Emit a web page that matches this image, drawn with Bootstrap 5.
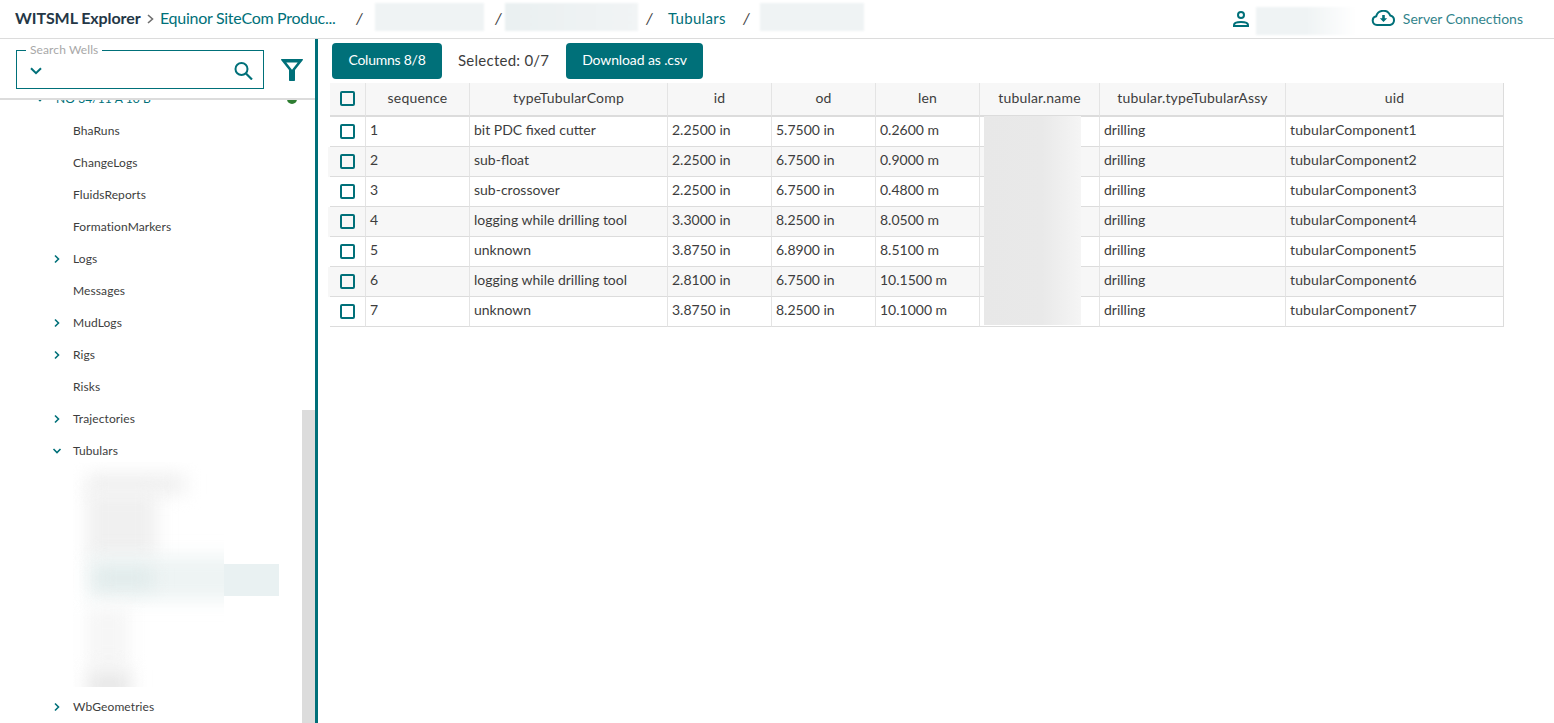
<!DOCTYPE html>
<html lang="en">
<head>
<meta charset="utf-8">
<title>WITSML Explorer</title>
<link href="https://cdn.jsdelivr.net/npm/bootstrap@5.3.0/dist/css/bootstrap.min.css" rel="stylesheet">
<style>
html,body{height:100%;overflow:hidden}
body{font-family:Lato,"Liberation Sans",sans-serif;color:#3d3d3d;background:#fff;font-size:14px}
.topbar{height:39px;border-bottom:1px solid #dcdcdc;padding:0 31px 0 15px}
.brand{font-size:16px;font-weight:700;color:#243746;letter-spacing:-.08px;width:126px;white-space:nowrap;padding-bottom:2px}
.brand-sep{margin:0 6px;width:7px;flex:none;margin-bottom:1px}
.crumb{font-size:16px;color:#007079;white-space:nowrap;padding-bottom:2px}
.crumb-first{width:176px;margin-right:20px;letter-spacing:-.28px}
.slash{font-size:16px;color:#3d3d3d;width:6px;flex:none;font-style:italic;padding-bottom:2px}
.blurbox{height:28px;background:#eff3f4;filter:blur(1px);flex:none;align-self:flex-start}
.bb1{width:109px;margin:3px 11px 0 13px}
.bb2{width:133px;margin:3px 8px 0 4px;background:linear-gradient(90deg,#eaf0f1,#f1f4f5)}
.bb3{width:104px;margin:3px 0 0 11px}
.tub{margin:0 16px 0 16px;width:59px;font-size:15px;letter-spacing:.3px}
.bb4{width:100px;margin:3px 15px 0 7px;background:linear-gradient(90deg,#eff3f4 50%,#fff)}
.server{color:#33848c;font-size:14px;margin-left:7px;white-space:nowrap;padding-bottom:2px}
.cloud{margin-bottom:3px}
.content{height:684px}
.side{width:318px;flex:none;border-right:3px solid #007079;overflow:hidden}
.side-head{height:61px;padding:11px 12px 0 16px;border-bottom:2px solid #dcdcdc;flex:none;position:relative;z-index:2;background:#fff}
.searchbox{width:248px;height:39px;border:1px solid #007079;position:relative;padding:2px 10px 0 13px}
.searchlabel{position:absolute;left:9px;top:-8px;background:#fff;padding:0 4px;font-size:12px;line-height:14px;color:#a8a8a8;letter-spacing:.1px}
.filter-ic{margin-top:9px}
.side-body{height:623px;overflow:hidden}
.tree{width:302px;flex:none;position:relative;margin-top:-17px}
.scroll-track{width:13px;flex:none;padding-top:310px}
.scroll-thumb{height:100%;background:#dcdcdc}
.node{height:32px;font-size:12px;letter-spacing:.1px;color:#3d3d3d;position:relative;padding-left:73px}
.node-top{padding-left:56px;color:#007079}
.tw{position:absolute;left:52px;top:11px}
.tw-top{left:35px}
.dot{position:absolute;left:287px;top:11px;width:10px;height:10px;border-radius:50%;background:#2e7d32}
.blank{height:224px}
.wash{position:absolute;left:73px;top:-5px;width:206px;height:225px;overflow:hidden}
.wash-row{position:absolute;left:0;top:102px;right:0;height:32px;background:#e9f1f2}
.wash-a{position:absolute;left:0;top:0;width:151px;height:225px;background:#fff;overflow:hidden}
.smudge{position:absolute;background:#eeeeee;filter:blur(9px)}
.s1{left:14px;top:12px;width:98px;height:20px;background:#efefef}
.s2{left:14px;top:28px;width:70px;height:70px;background:#f0f0f0}
.s3{left:14px;top:94px;width:170px;height:44px;background:#eef4f4}
.s4{left:22px;top:106px;width:58px;height:20px;background:#dfeaea}
.s5{left:14px;top:145px;width:42px;height:60px;background:#f6f6f6}
.s6{left:14px;top:208px;width:44px;height:30px;background:#e8e8e8}
.main{padding:4px 0 0 12px;min-width:0}
.toolbar{padding-left:2px;height:36px;margin-bottom:4px}
.tealbtn{background:#007079;border:0;color:#fff;font-size:14px;height:36px;border-radius:4px;padding:0 0 4px;letter-spacing:-.12px;--bs-btn-hover-bg:#004f55}
.b1{width:110px}.b2{width:137px}
.b1{letter-spacing:-.25px}
.selected{color:#3d3d3d;font-size:15px;margin:0 16px;width:92px;white-space:nowrap;letter-spacing:.25px;padding-bottom:2px}
.gridwrap{width:1174px;position:relative}
.grid{table-layout:fixed;width:1174px;margin:0;border-collapse:separate;border-spacing:0;font-size:14px;color:#3d3d3d}
.grid th{font-weight:400;text-align:center;background:#f7f7f7;height:34px;padding:0 4px 3px;border:0;border-right:1px solid #e4e4e4;border-bottom:2px solid #dcdcdc;letter-spacing:.2px;white-space:nowrap;vertical-align:middle;color:#3d3d3d}
.grid td{height:30px;padding:0 5px 4px 4px;border:0;border-right:1px solid #e4e4e4;border-bottom:1px solid #dcdcdc;vertical-align:middle;white-space:nowrap;background:#fff;color:#3d3d3d}
.grid td.boxcell{padding:0}
.grid th.boxcell{padding:0 0 1px}
.grid tbody tr:nth-child(even) td{background:#f7f7f7}
.grid tbody tr:nth-child(even) td:first-child{box-shadow:-2px 0 0 #f7f7f7}
.grid th:last-child,.grid td:last-child{border-right:1px solid #dcdcdc}
.grid td.uidcell{letter-spacing:.15px}
.c0{width:36px}.c1{width:104px}.c2{width:198px}.c3,.c4,.c5{width:104px}.c6{width:120px}.c7{width:186px}.c8{width:218px}
.chk{appearance:none;display:block;width:15px;height:15px;margin:0 auto 0 10px;border:2px solid #007079;border-radius:2px;background:transparent}
.redact{position:absolute;left:654px;top:33px;width:97px;height:209px;background:linear-gradient(90deg,#e8e8e8,#e9e9e9 60%,#f5f5f5);filter:blur(.5px)}
</style>
</head>
<body>
<header class="topbar d-flex align-items-center">
  <span class="brand">WITSML Explorer</span>
  <svg class="brand-sep" width="7" height="10" viewBox="0 0 7 10"><path d="M1 1l4.500 4L1 9" fill="none" stroke="#6f6f6f" stroke-width="1.600"/></svg>
  <span class="crumb crumb-first">Equinor SiteCom Produc...</span>
  <span class="slash">/</span>
  <div class="blurbox bb1"></div>
  <span class="slash">/</span>
  <div class="blurbox bb2"></div>
  <span class="slash">/</span>
  <span class="crumb tub">Tubulars</span>
  <span class="slash">/</span>
  <div class="blurbox bb3"></div>
  <div class="ms-auto d-flex align-items-center">
    <svg width="16" height="16" viewBox="0 0 16 16"><circle cx="8" cy="4" r="3" fill="none" stroke="#007079" stroke-width="2"/><path d="M1 15v-1c0-2 3.600-3 7-3s7 1 7 3v1z" fill="none" stroke="#007079" stroke-width="2"/></svg>
    <div class="blurbox bb4"></div>
    <svg class="cloud" width="25" height="16" viewBox="0 0 25 16"><path d="M6 15a4.400 4.400 0 0 1-.8-8.700A7.400 7.400 0 0 1 19.200 5.400 4.900 4.900 0 0 1 19 15z" fill="none" stroke="#007079" stroke-width="2"/><path d="M11.200 5h2.600v3.200h2.400L12.500 12 8.800 8.200h2.400z" fill="#007079"/></svg>
    <span class="server">Server Connections</span>
  </div>
</header>
<div class="content d-flex">
  <aside class="side d-flex flex-column">
    <div class="side-head d-flex align-items-start">
      <div class="searchbox d-flex align-items-center justify-content-between">
        <span class="searchlabel">Search Wells</span>
        <svg width="12" height="8" viewBox="0 0 12 8"><path d="M1 1.200l5 5 5-5" fill="none" stroke="#007079" stroke-width="2"/></svg>
        <svg width="19" height="18" viewBox="0 0 19 18"><circle cx="7.500" cy="7" r="6" fill="none" stroke="#007079" stroke-width="2"/><path d="M12 11.500l6 6" stroke="#007079" stroke-width="2.200"/></svg>
      </div>
      <svg class="filter-ic ms-auto" width="22" height="22" viewBox="0 0 22 22"><path fill="#007079" fill-rule="evenodd" d="M.6 0h20.800c.5 0 .8.600.5 1L14 11v10.300c0 .4-.3.700-.7.700H8.700c-.4 0-.7-.3-.7-.7V11L.1 1C-.2.600.1 0 .6 0zM5.300 3.500L11 10.700l5.700-7.200z"/></svg>
    </div>
    <div class="side-body d-flex">
      <div class="tree">
        <div class="node node-top d-flex align-items-center"><svg class="tw tw-top" width="10" height="10" viewBox="0 0 10 10"><path d="M1.500 3l3.500 3.500L8.500 3" fill="none" stroke="#007079" stroke-width="1.600"/></svg>NO 34/11 A 10 B<span class="dot"></span></div>
        <div class="node d-flex align-items-center">BhaRuns</div>
        <div class="node d-flex align-items-center">ChangeLogs</div>
        <div class="node d-flex align-items-center">FluidsReports</div>
        <div class="node d-flex align-items-center">FormationMarkers</div>
        <div class="node d-flex align-items-center"><svg class="tw" width="10" height="10" viewBox="0 0 10 10"><path d="M3 1.500L6.500 5 3 8.500" fill="none" stroke="#007079" stroke-width="1.600"/></svg>Logs</div>
        <div class="node d-flex align-items-center">Messages</div>
        <div class="node d-flex align-items-center"><svg class="tw" width="10" height="10" viewBox="0 0 10 10"><path d="M3 1.500L6.500 5 3 8.500" fill="none" stroke="#007079" stroke-width="1.600"/></svg>MudLogs</div>
        <div class="node d-flex align-items-center"><svg class="tw" width="10" height="10" viewBox="0 0 10 10"><path d="M3 1.500L6.500 5 3 8.500" fill="none" stroke="#007079" stroke-width="1.600"/></svg>Rigs</div>
        <div class="node d-flex align-items-center">Risks</div>
        <div class="node d-flex align-items-center"><svg class="tw" width="10" height="10" viewBox="0 0 10 10"><path d="M3 1.500L6.500 5 3 8.500" fill="none" stroke="#007079" stroke-width="1.600"/></svg>Trajectories</div>
        <div class="node d-flex align-items-center"><svg class="tw" width="10" height="10" viewBox="0 0 10 10"><path d="M1.500 3l3.500 3.500L8.500 3" fill="none" stroke="#007079" stroke-width="1.600"/></svg>Tubulars</div>
        <div class="blank position-relative">
          <div class="wash">
            <div class="wash-row"></div>
            <div class="wash-a">
              <div class="smudge s1"></div><div class="smudge s2"></div><div class="smudge s3"></div><div class="smudge s4"></div><div class="smudge s5"></div><div class="smudge s6"></div>
            </div>
          </div>
        </div>
        <div class="node d-flex align-items-center"><svg class="tw" width="10" height="10" viewBox="0 0 10 10"><path d="M3 1.500L6.500 5 3 8.500" fill="none" stroke="#007079" stroke-width="1.600"/></svg>WbGeometries</div>
      </div>
      <div class="scroll-track"><div class="scroll-thumb"></div></div>
    </div>
  </aside>
  <main class="main flex-grow-1">
    <div class="toolbar d-flex align-items-center">
      <button type="button" class="btn tealbtn b1">Columns 8/8</button>
      <span class="selected">Selected: 0/7</span>
      <button type="button" class="btn tealbtn b2">Download as .csv</button>
    </div>
    <div class="gridwrap">
      <table class="table grid">
        <colgroup><col class="c0"><col class="c1"><col class="c2"><col class="c3"><col class="c4"><col class="c5"><col class="c6"><col class="c7"><col class="c8"></colgroup>
        <thead><tr><th class="boxcell"><input class="chk" type="checkbox" aria-label="all"></th><th>sequence</th><th>typeTubularComp</th><th>id</th><th>od</th><th>len</th><th>tubular.name</th><th>tubular.typeTubularAssy</th><th>uid</th></tr></thead>
        <tbody>
          <tr><td class="boxcell"><input class="chk" type="checkbox" aria-label="1"></td><td>1</td><td>bit PDC fixed cutter</td><td>2.2500 in</td><td>5.7500 in</td><td>0.2600 m</td><td></td><td>drilling</td><td class="uidcell">tubularComponent1</td></tr>
          <tr><td class="boxcell"><input class="chk" type="checkbox" aria-label="2"></td><td>2</td><td>sub-float</td><td>2.2500 in</td><td>6.7500 in</td><td>0.9000 m</td><td></td><td>drilling</td><td class="uidcell">tubularComponent2</td></tr>
          <tr><td class="boxcell"><input class="chk" type="checkbox" aria-label="3"></td><td>3</td><td>sub-crossover</td><td>2.2500 in</td><td>6.7500 in</td><td>0.4800 m</td><td></td><td>drilling</td><td class="uidcell">tubularComponent3</td></tr>
          <tr><td class="boxcell"><input class="chk" type="checkbox" aria-label="4"></td><td>4</td><td>logging while drilling tool</td><td>3.3000 in</td><td>8.2500 in</td><td>8.0500 m</td><td></td><td>drilling</td><td class="uidcell">tubularComponent4</td></tr>
          <tr><td class="boxcell"><input class="chk" type="checkbox" aria-label="5"></td><td>5</td><td>unknown</td><td>3.8750 in</td><td>6.8900 in</td><td>8.5100 m</td><td></td><td>drilling</td><td class="uidcell">tubularComponent5</td></tr>
          <tr><td class="boxcell"><input class="chk" type="checkbox" aria-label="6"></td><td>6</td><td>logging while drilling tool</td><td>2.8100 in</td><td>6.7500 in</td><td>10.1500 m</td><td></td><td>drilling</td><td class="uidcell">tubularComponent6</td></tr>
          <tr><td class="boxcell"><input class="chk" type="checkbox" aria-label="7"></td><td>7</td><td>unknown</td><td>3.8750 in</td><td>8.2500 in</td><td>10.1000 m</td><td></td><td>drilling</td><td class="uidcell">tubularComponent7</td></tr>
        </tbody>
      </table>
      <div class="redact"></div>
    </div>
  </main>
</div>
<script src="https://cdn.jsdelivr.net/npm/bootstrap@5.3.0/dist/js/bootstrap.bundle.min.js"></script>
</body>
</html>
